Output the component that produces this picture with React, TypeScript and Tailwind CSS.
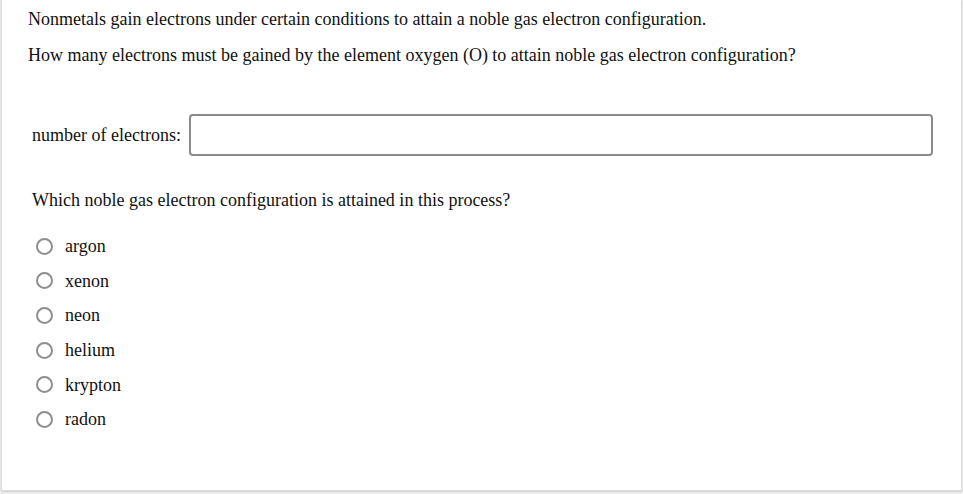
const options = ['argon', 'xenon', 'neon', 'helium', 'krypton', 'radon'];

export default function App() {
    return (
        <div className="h-[494px] w-[963px] overflow-hidden bg-[#f4f4f4] font-['Liberation_Serif',serif] text-[18px] text-[#111]">
            <div className="-mt-px ml-px h-[492px] w-[961px] border border-[#dcdcdc] bg-white pl-[26px] pr-[28px] pt-[9px] shadow-[0_1px_2px_rgba(0,0,0,0.18)]">
                <p className="leading-5">
                    Nonmetals gain electrons under certain conditions to attain a noble gas electron configuration.
                </p>
                <p className="mt-4 leading-5">
                    How many electrons must be gained by the element oxygen (O) to attain noble gas electron configuration?
                </p>

                <div className="mt-[49px] flex h-[42px] items-center pl-[4px]">
                    <label className="leading-5">number of electrons:</label>
                    <input
                        type="text"
                        className="ml-[8px] h-[42px] flex-1 rounded-[4px] border-2 border-[#8a8a8a] bg-white outline-none"
                    />
                </div>

                <p className="mt-[34px] pl-[4px] leading-5">
                    Which noble gas electron configuration is attained in this process?
                </p>

                <div className="mt-[19px] flex flex-col">
                    {options.map((opt) => (
                        <label key={opt} className="flex h-[34.6px] items-center">
                            <span className="ml-[8px] h-[17px] w-[17px] rounded-full border-2 border-[#8e8e8e] bg-white" />
                            <span className="ml-[12px] leading-5">{opt}</span>
                        </label>
                    ))}
                </div>
            </div>
        </div>
    );
}
